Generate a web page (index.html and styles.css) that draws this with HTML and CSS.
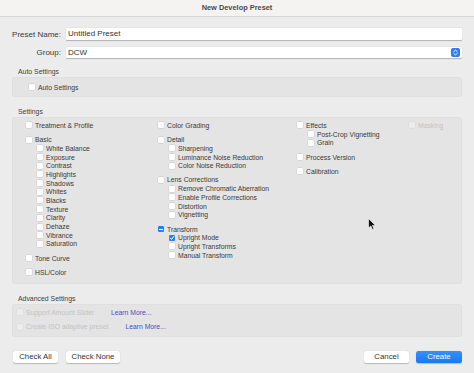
FILE: index.html
```html
<!DOCTYPE html>
<html>
  <head>
    <title>New Develop Preset</title>
    <link rel="stylesheet" href="styles.css">
  </head>
  <body>
    <div class="titlebar">New Develop Preset</div>

    <div class="dialog">
      <div class="form-row">
        <label>Preset Name:</label>
        <div class="field">Untitled Preset</div>
      </div>
      <div class="form-row">
        <label>Group:</label>
        <div class="field select">
          DCW
          <svg class="stepper" width="9" height="9" viewBox="0 0 9 9">
            <rect width="9" height="9" rx="2" fill="#2f7ef0"/>
            <path d="M2.8 3.6 L4.5 2.1 L6.2 3.6 M2.8 5.4 L4.5 6.9 L6.2 5.4" stroke="#fff" stroke-width="0.9" fill="none" stroke-linecap="round" stroke-linejoin="round"/>
          </svg>
        </div>
      </div>

      <div class="section auto">
        <div class="section-label">Auto Settings</div>
        <div class="box auto-box">
          <span class="item"><span class="cb"></span>Auto Settings</span>
        </div>
      </div>

      <div class="section">
        <div class="section-label">Settings</div>
        <div class="box settings-box">
          <div class="col">
            <div class="group"><span class="item"><span class="cb"></span>Treatment &amp; Profile</span></div>
            <div class="group">
              <span class="item"><span class="cb"></span>Basic</span>
              <span class="item sub"><span class="cb"></span>White Balance</span>
              <span class="item sub"><span class="cb"></span>Exposure</span>
              <span class="item sub"><span class="cb"></span>Contrast</span>
              <span class="item sub"><span class="cb"></span>Highlights</span>
              <span class="item sub"><span class="cb"></span>Shadows</span>
              <span class="item sub"><span class="cb"></span>Whites</span>
              <span class="item sub"><span class="cb"></span>Blacks</span>
              <span class="item sub"><span class="cb"></span>Texture</span>
              <span class="item sub"><span class="cb"></span>Clarity</span>
              <span class="item sub"><span class="cb"></span>Dehaze</span>
              <span class="item sub"><span class="cb"></span>Vibrance</span>
              <span class="item sub"><span class="cb"></span>Saturation</span>
            </div>
            <div class="group"><span class="item"><span class="cb"></span>Tone Curve</span></div>
            <div class="group"><span class="item"><span class="cb"></span>HSL/Color</span></div>
          </div>
          <div class="col">
            <div class="group"><span class="item"><span class="cb"></span>Color Grading</span></div>
            <div class="group">
              <span class="item"><span class="cb"></span>Detail</span>
              <span class="item sub"><span class="cb"></span>Sharpening</span>
              <span class="item sub"><span class="cb"></span>Luminance Noise Reduction</span>
              <span class="item sub"><span class="cb"></span>Color Noise Reduction</span>
            </div>
            <div class="group">
              <span class="item"><span class="cb"></span>Lens Corrections</span>
              <span class="item sub"><span class="cb"></span>Remove Chromatic Aberration</span>
              <span class="item sub"><span class="cb"></span>Enable Profile Corrections</span>
              <span class="item sub"><span class="cb"></span>Distortion</span>
              <span class="item sub"><span class="cb"></span>Vignetting</span>
            </div>
            <div class="group">
              <span class="item"><span class="cb on mixed"></span>Transform</span>
              <span class="item sub">
                <span class="cb on">
                  <svg width="6" height="6" viewBox="0 0 6 6"><path d="M1.3 3.1 L2.5 4.4 L4.8 1.5" stroke="#fff" stroke-width="1" fill="none" stroke-linecap="round" stroke-linejoin="round"/></svg>
                </span>Upright Mode</span>
              <span class="item sub"><span class="cb"></span>Upright Transforms</span>
              <span class="item sub"><span class="cb"></span>Manual Transform</span>
            </div>
          </div>
          <div class="col">
            <div class="group">
              <span class="item"><span class="cb"></span>Effects</span>
              <span class="item sub"><span class="cb"></span>Post-Crop Vignetting</span>
              <span class="item sub"><span class="cb"></span>Grain</span>
            </div>
            <div class="group"><span class="item"><span class="cb"></span>Process Version</span></div>
            <div class="group"><span class="item"><span class="cb"></span>Calibration</span></div>
          </div>
          <div class="col">
            <span class="item disabled"><span class="cb"></span>Masking</span>
          </div>
        </div>
      </div>

      <div class="section">
        <div class="section-label">Advanced Settings</div>
        <div class="box advanced-box">
          <div class="adv-row">
            <span class="item disabled"><span class="cb"></span>Support Amount Slider</span>
            <a class="link">Learn More...</a>
          </div>
          <div class="adv-row">
            <span class="item disabled"><span class="cb"></span>Create ISO adaptive preset</span>
            <a class="link">Learn More...</a>
          </div>
        </div>
      </div>

      <div class="actions">
        <div class="btn-group">
          <button class="btn check-all">Check All</button>
          <button class="btn check-none">Check None</button>
        </div>
        <div class="btn-group">
          <button class="btn cancel">Cancel</button>
          <button class="btn primary">Create</button>
        </div>
      </div>
    </div>

    <!-- mouse pointer caught in the screenshot -->
    <svg class="pointer" width="9" height="13" viewBox="0 0 9 13">
      <path d="M0.5 0.5 L0.5 10 L2.8 7.9 L4.4 11.6 L5.9 11 L4.4 7.4 L7.4 7.4 Z" fill="#111" stroke="#fff" stroke-width="0.6"/>
    </svg>
  </body>
</html>
```

FILE: styles.css
```css
body {
  margin: 0;
  width: 474px;
  height: 373px;
  overflow: hidden;
  background: #ececec;
  font-family: "Liberation Sans", Arial, sans-serif;
  color: #3a3a3a;
  position: relative;
}

.titlebar {
  height: 16px;
  line-height: 16px;
  text-align: center;
  font-size: 7.4px;
  font-weight: bold;
  color: #4a4a4a;
  background: #f5f2f2;
  border-bottom: 1px solid #d6d4d4;
}

.dialog {
  padding: 11px 12px 0;
}

.form-row {
  display: flex;
  align-items: center;
  height: 12px;
  margin-bottom: 6px;
  font-size: 8px;
}

.form-row label {
  width: 49px;
  text-align: right;
  margin-right: 5px;
  color: #3a3a3a;
}

.field {
  flex: 1;
  height: 12px;
  line-height: 12px;
  padding-left: 2px;
  background: #fff;
  border-radius: 1px;
  box-shadow: 0 0.5px 1px rgba(0, 0, 0, 0.25);
  color: #333;
}

.select {
  height: 11px;
  line-height: 11px;
  display: flex;
  justify-content: space-between;
  align-items: center;
  padding-right: 2px;
}

.stepper {
  display: block;
}

.section {
  margin-top: 10px;
}

.section.auto {
  margin-top: 9px;
}

.section-label {
  height: 9px;
  line-height: 9px;
  font-size: 6.9px;
  padding-left: 6px;
  color: #3e3e3e;
}

.box {
  margin-top: 1px;
  background: #e4e4e4;
  border-radius: 3px;
  box-shadow: inset 0 0 0 0.5px rgba(0, 0, 0, 0.04);
}

.auto-box {
  height: 20px;
  display: flex;
  align-items: center;
  padding-left: 17px;
}

.settings-box {
  height: 167px;
  box-sizing: border-box;
  padding: 4px 0 0 14px;
  display: grid;
  grid-template-columns: 132px 139px 112px auto;
  align-items: start;
}

.group {
  margin-bottom: 5.6px;
}

.item {
  display: flex;
  align-items: center;
  height: 8.7px;
  font-size: 6.8px;
  white-space: nowrap;
  color: #3a3a3a;
}

.item.sub {
  padding-left: 11px;
}

.cb {
  width: 6px;
  height: 6px;
  margin-right: 3px;
  background: #fff;
  border-radius: 1.3px;
  box-shadow: 0 0 0 0.4px rgba(0, 0, 0, 0.12);
  flex-shrink: 0;
  display: flex;
  align-items: center;
  justify-content: center;
}

.cb.on {
  background: #2c7cf0;
  box-shadow: none;
}

.cb.mixed::after {
  content: "";
  width: 4px;
  height: 1px;
  background: #fff;
}

.cb svg {
  display: block;
}

.disabled {
  color: #c3c3c3;
}

.disabled .cb {
  background: #ececec;
  box-shadow: 0 0 0 0.4px rgba(0, 0, 0, 0.05);
}

.advanced-box {
  height: 33px;
  box-sizing: border-box;
  padding: 1px 0 0 5px;
}

.adv-row {
  display: flex;
  align-items: center;
  height: 14.4px;
}

.link {
  margin-left: 17px;
  font-size: 6.8px;
  color: #3b55c0;
}

.actions {
  display: flex;
  justify-content: space-between;
  margin-top: 14px;
}

.btn-group {
  display: flex;
  gap: 8px;
}

.btn {
  height: 12px;
  padding: 0;
  border: none;
  border-radius: 2.5px;
  background: #fff;
  color: #333;
  font-family: "Liberation Sans", Arial, sans-serif;
  font-size: 7.8px;
  line-height: 12px;
  box-shadow: 0 0.5px 1px rgba(0, 0, 0, 0.22);
  cursor: pointer;
}

.check-all {
  width: 45px;
  margin-left: 1px;
}

.check-none {
  width: 54px;
}

.cancel {
  width: 45px;
  margin-right: -1px;
}

.primary {
  width: 46px;
  color: #fff;
  background: linear-gradient(#3a8ffb, #1a78f2);
}

.pointer {
  position: absolute;
  left: 368px;
  top: 218px;
}
```
